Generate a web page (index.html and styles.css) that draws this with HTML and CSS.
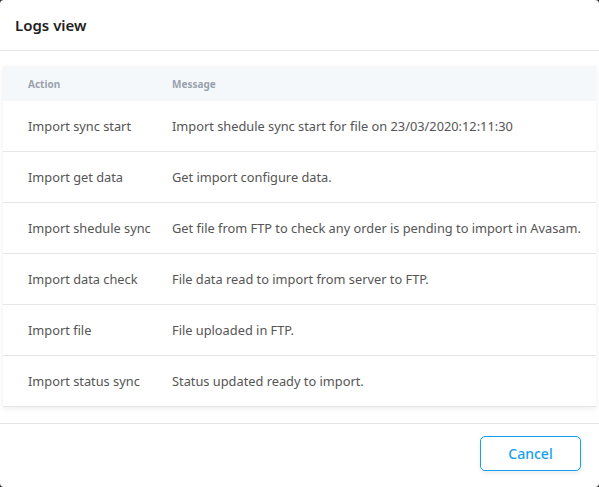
FILE: index.html
```html
<!DOCTYPE html>
<html>
<head>
<meta charset="utf-8">
<link rel="stylesheet" href="styles.css">
</head>
<body>
<div class="modal">
  <div class="modal-header">Logs view</div>
  <div class="modal-body">
    <div class="card">
      <table class="logs">
        <thead>
          <tr><th class="col-action">Action</th><th>Message</th></tr>
        </thead>
        <tbody>
          <tr><td>Import sync start</td><td>Import shedule sync start for file on 23/03/2020:12:11:30</td></tr>
          <tr><td>Import get data</td><td>Get import configure data.</td></tr>
          <tr><td>Import shedule sync</td><td>Get file from FTP to check any order is pending to import in Avasam.</td></tr>
          <tr><td>Import data check</td><td>File data read to import from server to FTP.</td></tr>
          <tr><td>Import file</td><td>File uploaded in FTP.</td></tr>
          <tr><td>Import status sync</td><td>Status updated ready to import.</td></tr>
        </tbody>
      </table>
    </div>
  </div>
  <div class="modal-footer">
    <button class="btn-cancel">Cancel</button>
  </div>
</div>
</body>
</html>
```
FILE: styles.css
```css
html, body {
  margin: 0;
  padding: 0;
  background: #2b2b2b;
}
body {
  font-family: "Noto Sans", "Open Sans", sans-serif;
  width: 599px;
  height: 487px;
  overflow: hidden;
}
.modal {
  width: 599px;
  height: 487px;
  background: #fff;
  border-radius: 4px;
  display: flex;
  flex-direction: column;
}
.modal-header {
  height: 51px;
  box-sizing: border-box;
  border-bottom: 1px solid #e4e4e4;
  padding: 0 15px;
  display: flex;
  align-items: center;
  font-size: 15px;
  font-weight: 600;
  color: #222;
}
.modal-body {
  padding: 15px 3px 16px 3px;
  border-bottom: 1px solid #e4e4e4;
}
.card {
  background: #fff;
  box-shadow: 0 2px 6px rgba(0,0,0,0.07);
}
.logs {
  width: 100%;
  border-collapse: collapse;
  table-layout: fixed;
}
.logs th {
  background: #f5f8fb;
  height: 35px;
  padding: 0 0 0 25px;
  text-align: left;
  font-size: 10px;
  font-weight: 700;
  color: #9aa2ae;
}
.logs th.col-action {
  width: 119px;
}
.logs td {
  height: 50px;
  padding: 0 0 0 25px;
  border-bottom: 1px solid #e6e6e6;
  font-size: 12.8px;
  color: #555;
  white-space: nowrap;
}
.modal-footer {
  display: flex;
  justify-content: flex-end;
  padding: 12px 18px 0 0;
}
.btn-cancel {
  width: 101px;
  height: 35px;
  border: 1px solid #13a0f0;
  border-radius: 5px;
  background: #fff;
  color: #13a0f0;
  font-family: "Noto Sans", sans-serif;
  font-size: 14px;
  font-weight: 500;
  box-shadow: 0 2px 5px rgba(0,0,0,0.08);
}
```
